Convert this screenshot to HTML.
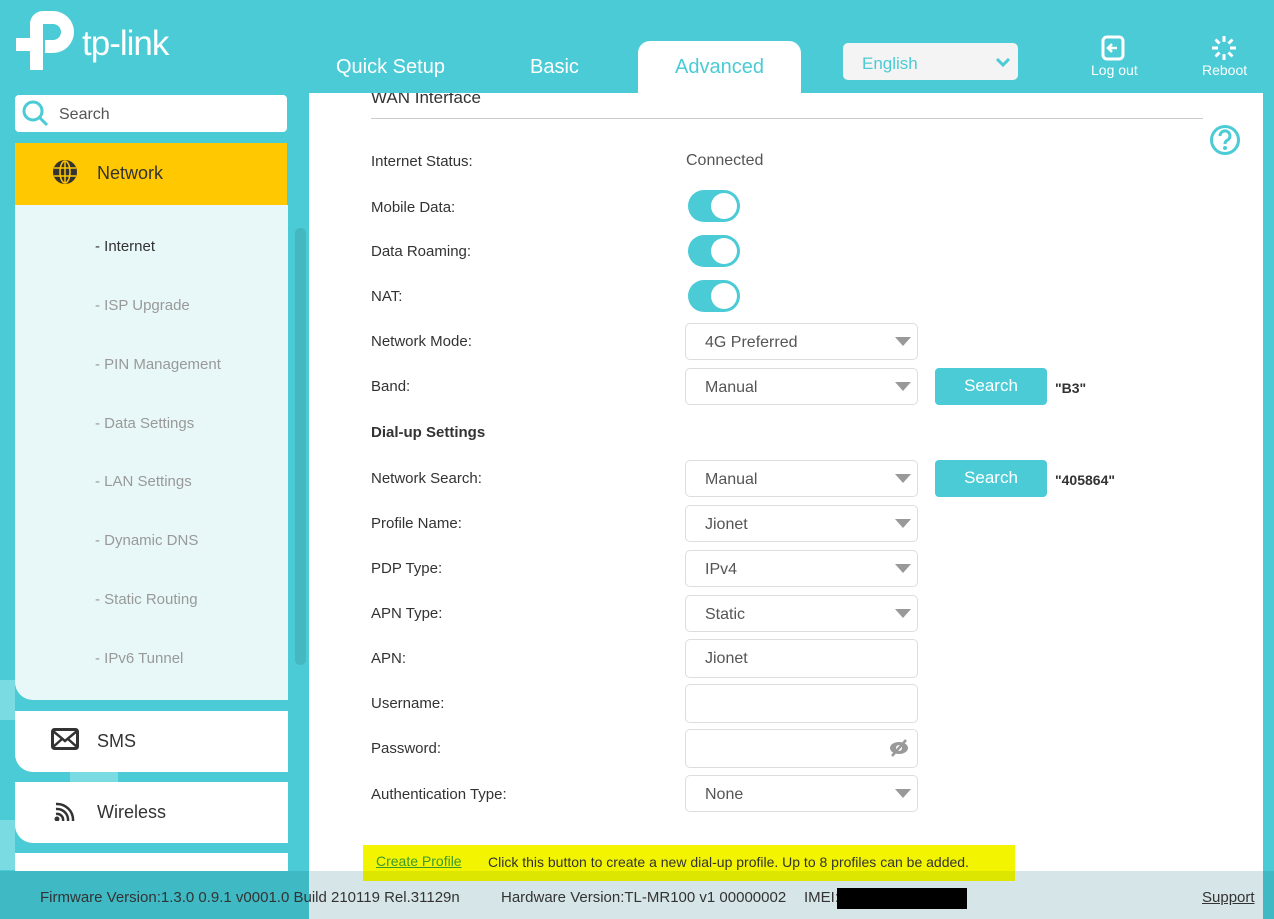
<!DOCTYPE html>
<html><head><meta charset="utf-8"><style>
*{margin:0;padding:0;box-sizing:border-box}
body{width:1274px;height:919px;overflow:hidden;background:#4bcbd6;font-family:"Liberation Sans",sans-serif;position:relative}
.a{position:absolute}
.lbl{position:absolute;left:371px;font-size:15px;color:#333}
.sel{position:absolute;left:685px;width:233px;height:37px;border:1px solid #ddd;border-radius:5px;background:#fff;font-size:16px;color:#555;padding-left:19px;line-height:38px}
.sel.dd:after{content:"";position:absolute;right:6px;top:13px;border-left:8px solid transparent;border-right:8px solid transparent;border-top:9px solid #999}
.tg{position:absolute;left:688px;width:52px;height:32px;border-radius:16px;background:#4bcbd6}
.tg:after{content:"";position:absolute;right:3px;top:3px;width:26px;height:26px;border-radius:50%;background:#fff}
.btn{position:absolute;left:935px;width:112px;height:37px;background:#4bcbd6;border-radius:4px;color:#fff;font-size:17px;text-align:center;line-height:36px}
.sub{position:absolute;left:95px;font-size:15px;color:#999}
.box{position:absolute;left:15px;width:273px;background:#fff;border-radius:0 0 0 18px}
</style></head><body>
<div class="a" style="left:0;top:680px;width:15px;height:40px;background:#7adbe3"></div>
<div class="a" style="left:0;top:820px;width:15px;height:50px;background:#7adbe3"></div>
<div class="a" style="left:70px;top:772px;width:48px;height:10px;background:#7adbe3"></div>
<div class="a" style="left:309px;top:90px;width:954px;height:829px;background:#fff"></div>
<div class="a" style="left:371px;top:88px;font-size:17px;color:#333">WAN Interface</div>
<div class="a" style="left:371px;top:118px;width:832px;height:1px;background:#ccc"></div>
<div class="a" style="left:0;top:0;width:1274px;height:93px;background:#4bcbd6"></div>
<svg class="a" style="left:14px;top:10px" width="64" height="62" viewBox="0 0 64 62"><path d="M16 28V14A13 13 0 0 1 29 1h10a21 21 0 0 1 0 42h-8V30h8a8 8 0 0 0 0-16H29v46H16V41H2V28z" fill="#fff"/></svg>
<div class="a" style="left:82px;top:24px;font-size:35px;color:#fff;letter-spacing:-1px">tp-link</div>
<div class="a" style="left:336px;top:56px;font-size:20px;color:#fff">Quick Setup</div>
<div class="a" style="left:530px;top:56px;font-size:20px;color:#fff">Basic</div>
<div class="a" style="left:638px;top:41px;width:163px;height:54px;background:#fff;border-radius:12px 12px 0 0"></div>
<div class="a" style="left:675px;top:56px;font-size:20px;color:#4bcbd6">Advanced</div>
<div class="a" style="left:843px;top:43px;width:175px;height:37px;background:#f4f4f4;border-radius:5px"></div>
<div class="a" style="left:862px;top:54px;font-size:17px;color:#4bcbd6">English</div>
<svg class="a" style="left:995px;top:56px" width="16" height="12"><path d="M2 3l6 6 6-6" stroke="#4bcbd6" stroke-width="3" fill="none"/></svg>
<svg class="a" style="left:1101px;top:35px" width="24" height="26"><rect x="2" y="2" width="20" height="22" rx="4" stroke="#fff" stroke-width="3" fill="none"/><path d="M16 13H8M11 9l-4 4 4 4" stroke="#fff" stroke-width="2.5" fill="none"/></svg>
<div class="a" style="left:1091px;top:62px;font-size:14px;color:#fff">Log out</div>
<svg class="a" style="left:1211px;top:35px" width="26" height="26" stroke="#fff" stroke-width="3"><path d="M13 1v6M13 19v6M1 13h6M19 13h6M4.5 4.5l4 4M17.5 17.5l4 4M21.5 4.5l-4 4M8.5 17.5l-4 4"/></svg>
<div class="a" style="left:1202px;top:62px;font-size:14px;color:#fff">Reboot</div>
<div class="a" style="left:15px;top:95px;width:272px;height:37px;background:#fff;border-radius:4px"></div>
<svg class="a" style="left:22px;top:100px" width="28" height="28"><circle cx="11" cy="11" r="9" stroke="#4bcbd6" stroke-width="3" fill="none"/><path d="M17 17l8 8" stroke="#4bcbd6" stroke-width="3"/></svg>
<div class="a" style="left:59px;top:106px;font-size:16px;color:#555">Search</div>
<div class="a" style="left:15px;top:143px;width:272px;height:62px;background:#ffc800"></div>
<svg class="a" style="left:52px;top:159px" width="26" height="26"><circle cx="13" cy="13" r="12" fill="#333"/><g stroke="#ffc800" stroke-width="1.5" fill="none"><ellipse cx="13" cy="13" rx="5" ry="11"/><path d="M2 9h22M2 17h22M13 2v22"/></g></svg>
<div class="a" style="left:97px;top:163px;font-size:18px;color:#333">Network</div>
<div class="a" style="left:15px;top:205px;width:273px;height:495px;background:#e8f8f9;border-radius:0 0 0 18px"></div>
<div class="a" style="left:295px;top:228px;width:11px;height:437px;background:#45b7c1;border-radius:5px"></div>
<div class="sub" style="top:238px;color:#333">- Internet</div>
<div class="sub" style="top:297px">- ISP Upgrade</div>
<div class="sub" style="top:356px">- PIN Management</div>
<div class="sub" style="top:415px">- Data Settings</div>
<div class="sub" style="top:473px">- LAN Settings</div>
<div class="sub" style="top:532px">- Dynamic DNS</div>
<div class="sub" style="top:591px">- Static Routing</div>
<div class="sub" style="top:650px">- IPv6 Tunnel</div>
<div class="box" style="top:711px;height:61px"></div>
<svg class="a" style="left:51px;top:728px" width="28" height="22"><rect x="1.5" y="1.5" width="25" height="19" rx="2" stroke="#333" stroke-width="3" fill="none"/><path d="M2 3l12 10 12-10M2 19l9-8M26 19l-9-8" stroke="#333" stroke-width="2.5" fill="none"/></svg>
<div class="a" style="left:97px;top:731px;font-size:18px;color:#333">SMS</div>
<div class="box" style="top:782px;height:61px"></div>
<svg class="a" style="left:54px;top:801px" width="22" height="20"><g stroke="#333" stroke-width="2.5" fill="none"><path d="M2 3a16 16 0 0 1 17 17"/><path d="M2 8a11 11 0 0 1 12 12"/><path d="M2 13a6 6 0 0 1 7 7"/></g><circle cx="3" cy="18" r="2.5" fill="#333"/></svg>
<div class="a" style="left:97px;top:802px;font-size:18px;color:#333">Wireless</div>
<div class="a" style="left:15px;top:853px;width:273px;height:30px;background:#fff"></div>
<svg class="a" style="left:1209px;top:124px" width="32" height="32"><circle cx="16" cy="16" r="13.5" stroke="#4bcbd6" stroke-width="3" fill="none"/><path d="M11 12a5 5 0 1 1 7 4.5c-1.5.8-2 1.5-2 3.5" stroke="#4bcbd6" stroke-width="3" fill="none"/><circle cx="16" cy="24" r="2" fill="#4bcbd6"/></svg>
<div class="lbl" style="top:153px">Internet Status:</div>
<div class="a" style="left:686px;top:152px;font-size:16px;color:#555">Connected</div>
<div class="lbl" style="top:199px">Mobile Data:</div><div class="tg" style="top:190px"></div>
<div class="lbl" style="top:243px">Data Roaming:</div><div class="tg" style="top:235px"></div>
<div class="lbl" style="top:288px">NAT:</div><div class="tg" style="top:280px"></div>
<div class="lbl" style="top:333px">Network Mode:</div><div class="sel dd" style="top:323px">4G Preferred</div>
<div class="lbl" style="top:378px">Band:</div><div class="sel dd" style="top:368px">Manual</div>
<div class="btn" style="top:368px">Search</div><div class="a" style="left:1055px;top:380px;font-size:14px;font-weight:bold;color:#333">"B3"</div>
<div class="lbl" style="top:424px;font-weight:bold">Dial-up Settings</div>
<div class="lbl" style="top:470px">Network Search:</div><div class="sel dd" style="top:460px">Manual</div>
<div class="btn" style="top:460px">Search</div><div class="a" style="left:1055px;top:472px;font-size:14px;font-weight:bold;color:#333">"405864"</div>
<div class="lbl" style="top:515px">Profile Name:</div><div class="sel dd" style="top:505px">Jionet</div>
<div class="lbl" style="top:560px">PDP Type:</div><div class="sel dd" style="top:550px">IPv4</div>
<div class="lbl" style="top:605px">APN Type:</div><div class="sel dd" style="top:595px">Static</div>
<div class="lbl" style="top:650px">APN:</div><div class="sel" style="top:639px;height:39px;line-height:38px">Jionet</div>
<div class="lbl" style="top:695px">Username:</div><div class="sel" style="top:684px;height:39px"></div>
<div class="lbl" style="top:740px">Password:</div><div class="sel" style="top:729px;height:39px"></div>
<svg class="a" style="left:888px;top:739px" width="22" height="18"><ellipse cx="11" cy="9" rx="9" ry="6" fill="#999"/><circle cx="11" cy="9" r="3" fill="#fff"/><path d="M4 17L18 1" stroke="#999" stroke-width="2.5"/></svg>
<div class="lbl" style="top:786px">Authentication Type:</div><div class="sel dd" style="top:775px">None</div>
<!-- footer -->
<div class="a" style="left:0;top:871px;width:309px;height:48px;background:#3fb9c4"></div>
<div class="a" style="left:1263px;top:871px;width:11px;height:48px;background:#3fb9c4"></div>
<div class="a" style="left:309px;top:871px;width:954px;height:48px;background:#d6e5e7"></div>
<div class="a" style="left:363px;top:845px;width:652px;height:26px;background:#f3f500"></div>
<div class="a" style="left:363px;top:871px;width:652px;height:10px;background:#dde600"></div>
<div class="a" style="left:376px;top:853px;font-size:14px;color:#3a9a2a;text-decoration:underline">Create Profile</div>
<div class="a" style="left:488px;top:854px;font-size:14px;color:#333">Click this button to create a new dial-up profile. Up to 8 profiles can be added.</div>
<div class="a" style="left:40px;top:889px;font-size:15px;color:#333;white-space:nowrap">Firmware Version:1.3.0 0.9.1 v0001.0 Build 210119 Rel.31129n</div>
<div class="a" style="left:501px;top:889px;font-size:15px;color:#333">Hardware Version:TL-MR100 v1 00000002</div>
<div class="a" style="left:804px;top:889px;font-size:15px;color:#333">IMEI:</div>
<div class="a" style="left:837px;top:888px;width:130px;height:21px;background:#000"></div>
<div class="a" style="left:1202px;top:889px;font-size:15px;color:#333;text-decoration:underline">Support</div>
</body></html>
